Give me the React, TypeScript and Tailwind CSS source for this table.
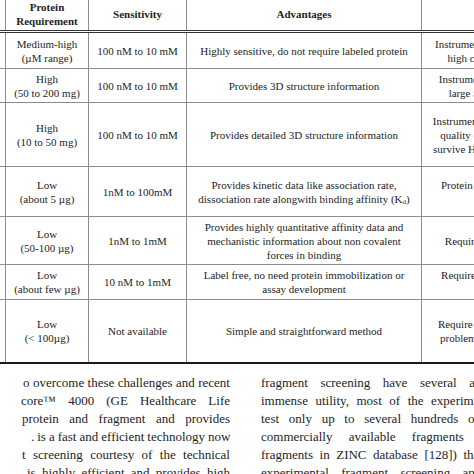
import React from "react";

type Row = {
  h: string;
  req: string[];
  sens: string;
  adv: React.ReactNode[];
  dis: string[];
  last?: boolean;
};

const rows: Row[] = [
  {
    h: "h-[36px]",
    req: ["Medium-high", "(µM range)"],
    sens: "100 nM to 10 mM",
    adv: ["Highly sensitive, do not require labeled protein"],
    dis: ["Instrument is expensive, requires a", "high concentration of protein"],
  },
  {
    h: "h-[34px]",
    req: ["High", "(50 to 200 mg)"],
    sens: "100 nM to 10 mM",
    adv: ["Provides 3D structure information"],
    dis: ["Instrument is expensive, requires", "large amount of pure protein"],
  },
  {
    h: "h-[64px]",
    req: ["High", "(10 to 50 mg)"],
    sens: "100 nM to 10 mM",
    adv: ["Provides detailed 3D structure information"],
    dis: [
      "Instrument is expensive, needs high",
      "quality crystals of protein which",
      "survive High intensity X-ray beams",
    ],
  },
  {
    h: "h-[50px]",
    req: ["Low", "(about 5 µg)"],
    sens: "1nM to 100mM",
    adv: [
      "Provides kinetic data like association rate,",
      <>
        dissociation rate alongwith binding affinity (K
        <sub className="text-[7px]">d</sub>)
      </>,
    ],
    dis: ["Protein immobilization required", "on sensor chip"],
  },
  {
    h: "h-[48px]",
    req: ["Low", "(50-100 µg)"],
    sens: "1nM to 1mM",
    adv: [
      "Provides highly quantitative affinity data and",
      "mechanistic information about non covalent",
      "forces in binding",
    ],
    dis: ["Requires large protein amount"],
  },
  {
    h: "h-[35px]",
    req: ["Low", "(about few µg)"],
    sens: "10 nM to 1mM",
    adv: ["Label free, no need protein immobilization or", "assay development"],
    dis: ["Requires fluorescent labeling of", "the target protein"],
  },
  {
    h: "h-[64px]",
    req: ["Low", "(< 100µg)"],
    sens: "Not available",
    adv: ["Simple and straightforward method"],
    dis: ["Require fluorescent dye and have", "problems with false positive hits"],
    last: true,
  },
];

function Lines({ items }: { items: React.ReactNode[] }) {
  return (
    <div className="flex flex-col items-center">
      {items.map((t, i) => (
        <div key={i} className="whitespace-nowrap leading-[14px]">
          {t}
        </div>
      ))}
    </div>
  );
}

function JLine({ text, className }: { text: string; className: string }) {
  const words = text.split(" ");
  return (
    <div className={"flex justify-between gap-x-[3px] whitespace-nowrap shrink-0 " + className}>
      {words.map((w, i) => (
        <span key={i}>{w}</span>
      ))}
    </div>
  );
}

const cell = "flex items-center justify-center text-center border-l border-[#8c8c8c] overflow-hidden";

export default function App() {
  return (
    <div className="w-[474px] h-[474px] overflow-hidden bg-white text-[#1e1e1e] font-['Liberation_Serif','Times_New_Roman',serif]">
      <div className="w-[601px] mt-[-2px] text-[11px]">
        <div className="grid grid-cols-[5px_83px_98px_235px_180px] h-[35px] border-b-[3px] border-double border-[#333333] font-bold">
          <div />
          <div className={cell}>
            <Lines items={["Protein", "Requirement"]} />
          </div>
          <div className={cell}>
            <Lines items={["Sensitivity"]} />
          </div>
          <div className={cell}>
            <Lines items={["Advantages"]} />
          </div>
          <div className={cell + " pl-[24px]"}>
            <Lines items={["Disadvantages"]} />
          </div>
        </div>
        {rows.map((r, i) => (
          <div
            key={i}
            className={
              "grid grid-cols-[5px_83px_98px_235px_180px] " +
              r.h +
              (r.last ? " border-b-2 border-[#1a1a1a]" : " border-b border-[#8c8c8c]")
            }
          >
            <div />
            <div className={cell}>
              <Lines items={r.req} />
            </div>
            <div className={cell}>
              <Lines items={[r.sens]} />
            </div>
            <div className={cell}>
              <Lines items={r.adv} />
            </div>
            <div className={cell}>
              <Lines items={r.dis} />
            </div>
          </div>
        ))}
      </div>

      <div className="flex mt-[10px] text-[13px] leading-[18px]">
        <div className="w-[230px] shrink-0 flex flex-col items-end">
          <JLine className="w-[207px]" text="o overcome these challenges and recent" />
          <JLine className="w-[209px]" text="core™ 4000 (GE Healthcare Life" />
          <JLine className="w-[208px]" text="protein and fragment and provides" />
          <JLine className="w-[199px]" text=". is a fast and efficient technology now" />
          <JLine className="w-[208px]" text="t screening courtesy of the technical" />
          <JLine className="w-[203px]" text="is highly efficient and provides high" />
        </div>
        <div className="ml-[31px] flex flex-col shrink-0">
          <JLine className="w-[266px]" text="fragment screening have several advantages" />
          <JLine className="w-[238px]" text="immense utility, most of the experimental" />
          <JLine className="w-[218px]" text="test only up to several hundreds of" />
          <JLine className="w-[240px]" text="commercially available fragments (out" />
          <JLine className="w-[222px]" text="fragments in ZINC database [128]) that" />
          <JLine className="w-[260px]" text="experimental fragment screening approaches" />
        </div>
      </div>
    </div>
  );
}
